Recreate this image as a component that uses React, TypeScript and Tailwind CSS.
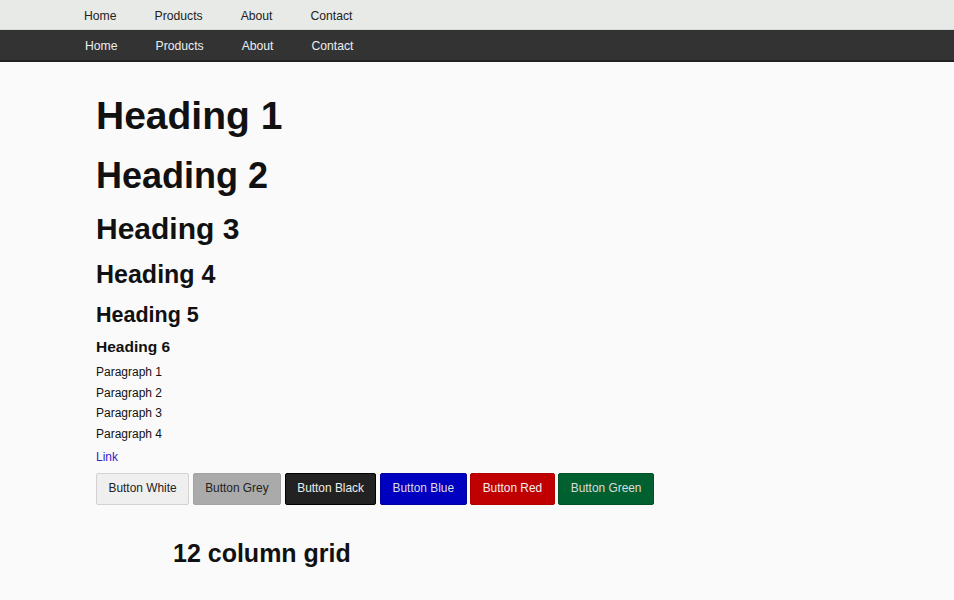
const NAV_ITEMS = ["Home", "Products", "About", "Contact"];

const BUTTONS = [
  { label: "Button White", cls: "bg-[#efefef] border-[#d2d2d2] text-[#222]" },
  { label: "Button Grey", cls: "bg-[#aaaaaa] border-[#a2a2a2] text-[#222]" },
  { label: "Button Black", cls: "bg-[#222222] border-[#000000] text-[#eeeeee]" },
  { label: "Button Blue", cls: "bg-[#0000c0] border-[#0000a0] text-[#dddddd]" },
  { label: "Button Red", cls: "bg-[#c00000] border-[#b00000] text-[#eeeeee]" },
  { label: "Button Green", cls: "bg-[#006030] border-[#005028] text-[#dddddd]" },
];

function NavBar({ dark }: { dark?: boolean }) {
  return (
    <nav
      className={
        dark
          ? "h-[32px] bg-[#333333] border-b-2 border-[#222222] text-[#eeeeee]"
          : "h-[30px] bg-[#e8eae7] border-b border-[#d6d8d5] text-[#222222]"
      }
    >
      <ul
        className={`flex h-full items-center pt-[3px] gap-[38px] text-[12.2px] ${
          dark ? "pl-[85px]" : "pl-[84px]"
        }`}
      >
        {NAV_ITEMS.map((item) => (
          <li key={item}>
            <a href="#">{item}</a>
          </li>
        ))}
      </ul>
    </nav>
  );
}

export default function App() {
  return (
    <div className="min-h-[600px] bg-[#fafafa] text-[#111111] font-['Liberation_Sans',Arial,sans-serif]">
      <NavBar />
      <NavBar dark />

      <main className="pl-[96px] flex flex-col items-start">
        <h1 className="mt-[31px] text-[39px] leading-[46px] font-bold">Heading 1</h1>
        <h2 className="mt-[17px] text-[36px] leading-[40px] font-bold">Heading 2</h2>
        <h3 className="mt-[16px] text-[30px] leading-[34px] font-bold">Heading 3</h3>
        <h4 className="mt-[13px] text-[25px] leading-[30px] font-bold">Heading 4</h4>
        <h5 className="mt-[13px] text-[21.5px] leading-[26px] font-bold">Heading 5</h5>
        <h6 className="mt-[9px] text-[15.5px] leading-[20px] font-bold">Heading 6</h6>

        <p className="mt-[5px] text-[12px] leading-[20.5px]">Paragraph 1</p>
        <p className="text-[12px] leading-[20.5px]">Paragraph 2</p>
        <p className="text-[12px] leading-[20.5px]">Paragraph 3</p>
        <p className="text-[12px] leading-[20.5px]">Paragraph 4</p>
        <a href="#" className="mt-[3px] text-[12px] leading-[20px] text-[#3322cc]">
          Link
        </a>

        <div className="mt-[6px] flex gap-[3.6px]">
          {BUTTONS.map((b) => (
            <button
              key={b.label}
              className={`h-[32px] px-[11.5px] border rounded-[2px] text-[11.9px] ${b.cls}`}
            >
              {b.label}
            </button>
          ))}
        </div>

        <h4 className="mt-[33px] ml-[77px] text-[25px] leading-[30px] font-bold">12 column grid</h4>
      </main>
    </div>
  );
}
